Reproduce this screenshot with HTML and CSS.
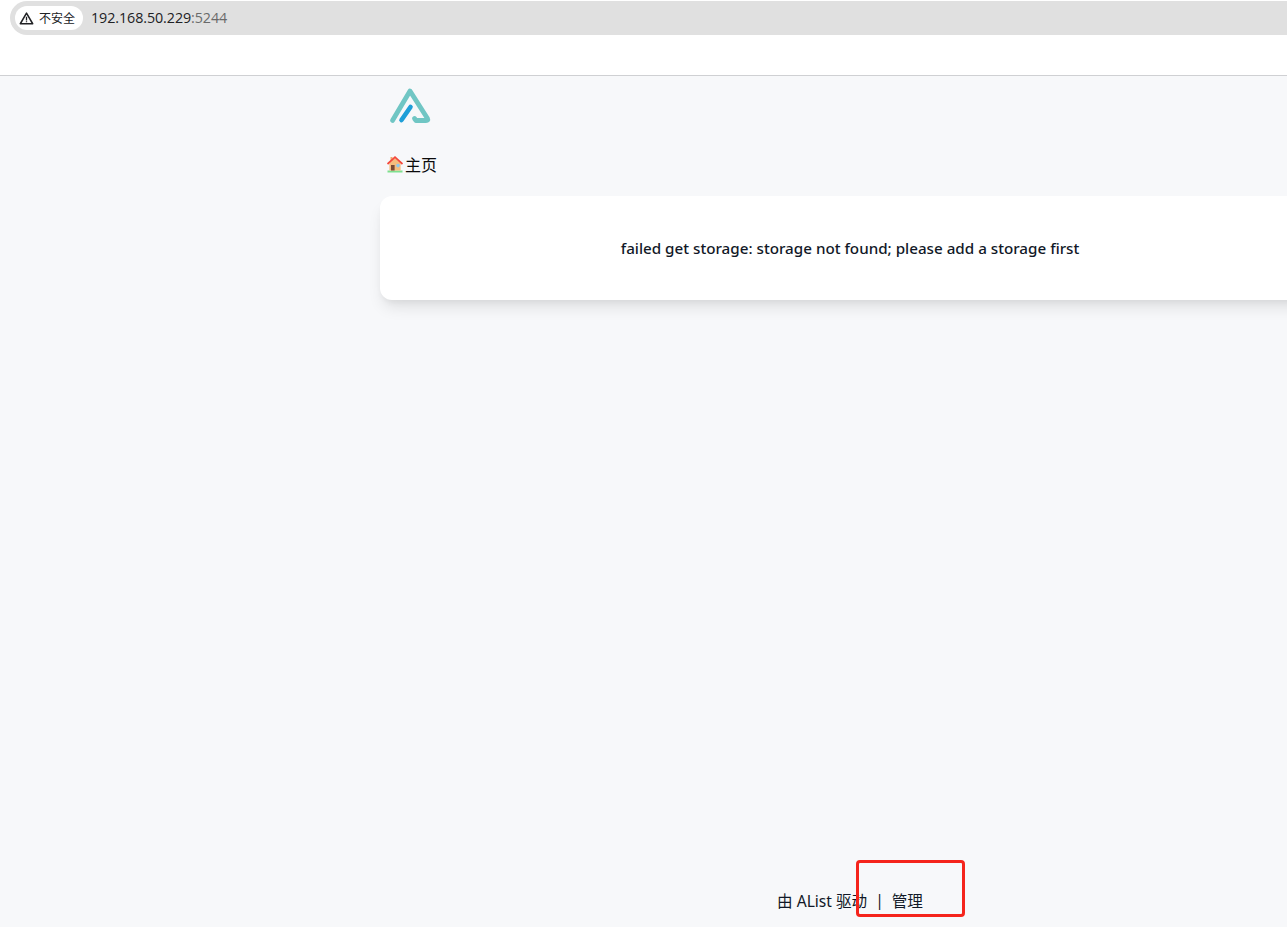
FILE: index.html
```html
<!DOCTYPE html>
<html lang="zh">
<head>
<meta charset="utf-8">
<title>AList</title>
<link rel="stylesheet" href="styles.css">
</head>
<body>
<header class="browser">
  <div class="address">
    <div class="chip">
      <svg class="warn" viewBox="0 0 16 16" width="15" height="15"><path d="M8 2.2 14.6 13.6H1.4Z" fill="none" stroke="#202124" stroke-width="1.6" stroke-linejoin="round"/><path d="M8 6.2V10M8 10.9v1.2" stroke="#202124" stroke-width="1.4"/></svg>
      <span>不安全</span>
    </div>
    <div class="url">192.168.50.229<span class="port">:5244</span></div>
  </div>
</header>
<div class="page">
  <main class="column">
    <svg class="logo" viewBox="0 0 42 38" width="42" height="38">
      <path d="M3.5 33.5 21 4 38.5 31.5Q39.5 33.5 37 33.5H27L25.5 31.5" fill="none" stroke="#70c6c4" stroke-width="4.8" stroke-linecap="round" stroke-linejoin="round"/>
      <path d="M12.5 33 21.5 20" fill="none" stroke="#1f9fd8" stroke-width="4.6" stroke-linecap="round"/>
    </svg>
    <nav class="crumb">
      <svg class="house" viewBox="0 0 18 18" width="18" height="18">
        <rect x="1.5" y="15.5" width="15" height="2" fill="#7ee08f"/>
        <path d="M3.4 8 9 3 14.6 8V15.5H3.4Z" fill="#f5bd7d"/>
        <rect x="4.5" y="2" width="2" height="4" fill="#f0a868"/>
        <path d="M1.5 9 9 2.2 16.5 9" fill="none" stroke="#f4483c" stroke-width="1.7"/>
        <rect x="5" y="10" width="3.6" height="5.5" fill="#7a4a34"/>
        <circle cx="12" cy="10.6" r="1.8" fill="#8cc8ee"/>
      </svg><span>主页</span>
    </nav>
    <section class="card">failed get storage: storage not found; please add a storage first</section>
    <footer class="foot">
      <span>由 AList 驱动</span><span class="sep">|</span><span>管理</span>
    </footer>
  </main>
</div>
<div class="mark"></div>
</body>
</html>
```

FILE: styles.css
```css
* { box-sizing: border-box; }
html, body { margin: 0; height: 927px; overflow: hidden; }
body {
  position: relative;
  width: 1287px;
  background: #f7f8fa;
  font-family: "Noto Sans", "Noto Sans CJK SC", sans-serif;
  color: #111827;
  display: flex;
  flex-direction: column;
}
.browser {
  height: 76px;
  flex: none;
  background: #fff;
  border-bottom: 1px solid #cfd0d3;
  padding: 1px 0 0 10px;
}
.address {
  height: 34px;
  background: #e0e0e0;
  border-radius: 17px 0 0 17px;
  display: flex;
  align-items: center;
  padding-left: 5px;
}
.chip {
  height: 24px;
  width: 68px;
  background: #fff;
  border-radius: 12px;
  display: flex;
  align-items: center;
  padding-left: 4px;
  gap: 5px;
  font-size: 12px;
  color: #202124;
}
.warn { flex: none; }
.url {
  margin-left: 8px;
  margin-top: -2px;
  font-family: "Open Sans", sans-serif;
  font-size: 14.3px;
  color: #202124;
  letter-spacing: -0.08px;
}
.port { color: #6a6a6a; }
.page { flex: 1; display: flex; min-height: 0; }
.column {
  width: 940px;
  flex: none;
  margin-left: 380px;
  display: flex;
  flex-direction: column;
}
.logo { display: block; margin: 11px 0 0 9px; flex: none; }
.crumb {
  display: flex;
  align-items: center;
  gap: 1px;
  margin: 27px 0 0 6px;
  height: 24px;
  font-size: 16px;
  color: #0b0b0b;
}
.card {
  margin-top: 20px;
  height: 104px;
  background: #fff;
  border-radius: 12px;
  box-shadow: 0 10px 15px -3px rgba(0,0,0,.1), 0 4px 6px -2px rgba(0,0,0,.05);
  display: flex;
  align-items: center;
  justify-content: center;
  font-size: 15.2px;
  font-weight: 500;
}
.foot {
  margin-top: auto;
  height: 50px;
  display: flex;
  justify-content: center;
  align-items: flex-start;
  gap: 8px;
  font-size: 15.6px;
  color: #111827;
  padding-top: 12px;
}
.sep { margin: 0; }
.mark {
  position: absolute;
  left: 856px;
  top: 860px;
  width: 109px;
  height: 57px;
  border: 3px solid #f5241c;
  border-radius: 4px;
}
```
